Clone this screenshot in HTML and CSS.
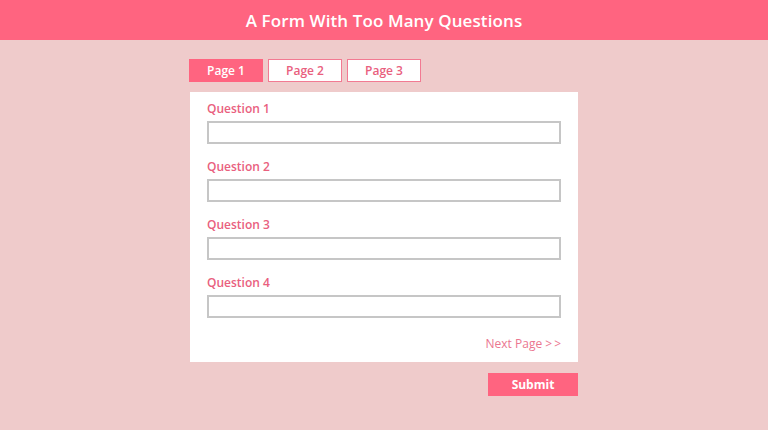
FILE: index.html
```html
<!DOCTYPE html>
<html lang="en">
<head>
<meta charset="utf-8">
<title>A Form With Too Many Questions</title>
<link rel="stylesheet" href="styles.css">
</head>
<body>
<header class="topbar">
  <h1 class="title">A Form With Too Many Questions</h1>
</header>
<main class="wrap">
  <nav class="tabs">
    <button class="tab active">Page 1</button>
    <button class="tab">Page 2</button>
    <button class="tab">Page 3</button>
  </nav>
  <form class="card">
    <div class="field">
      <label class="label">Question 1</label>
      <input class="input" type="text">
    </div>
    <div class="field">
      <label class="label">Question 2</label>
      <input class="input" type="text">
    </div>
    <div class="field">
      <label class="label">Question 3</label>
      <input class="input" type="text">
    </div>
    <div class="field">
      <label class="label">Question 4</label>
      <input class="input" type="text">
    </div>
    <div class="next-row"><a class="next" href="#">Next Page <span class="arrows">&gt;&gt;</span></a></div>
  </form>
  <div class="actions">
    <button class="submit">Submit</button>
  </div>
</main>
</body>
</html>
```
FILE: styles.css
```css
* { box-sizing: border-box; }
html, body {
  margin: 0;
  padding: 0;
  background: #efcbcb;
  font-family: "Open Sans", "Noto Sans", sans-serif;
  height: 100%;
}
.topbar {
  background: #ff6480;
  height: 40px;
  display: flex;
  align-items: center;
  justify-content: center;
}
.title {
  margin: 0;
  color: #ffffff;
  font-size: 17px;
  font-weight: 600;
  letter-spacing: 0.1px;
}
.wrap {
  width: 388px;
  margin: 0 auto;
  padding-top: 19px;
}
.tabs {
  display: flex;
  gap: 5px;
  margin-left: -1px;
}
.tab {
  width: 74px;
  height: 23px;
  background: #ffffff;
  border: 1px solid #f27a92;
  color: #e9607e;
  font-family: inherit;
  font-size: 12px;
  font-weight: 600;
  padding: 0;
}
.tab.active {
  background: #ff6480;
  border-color: #ff6480;
  color: #ffffff;
}
.card {
  background: #ffffff;
  margin: 10px 0 0;
  padding: 8px 17px 9px;
  height: 270px;
}
.field {
  display: flex;
  flex-direction: column;
  margin-bottom: 14px;
}
.label {
  color: #e9607e;
  font-size: 12px;
  font-weight: 600;
  line-height: 17px;
  margin-bottom: 4px;
}
.input {
  width: 354px;
  height: 23px;
  border: 2px solid #c6c6c6;
  background: #ffffff;
  margin: 0;
}
.next-row {
  display: flex;
  justify-content: flex-end;
  padding-top: 3px;
}
.next {
  color: #eb7690;
  font-size: 12px;
  text-decoration: none;
  line-height: 17px;
  white-space: nowrap;
  margin-right: -2px;
}
.arrows {
  letter-spacing: 2px;
}
.actions {
  display: flex;
  justify-content: flex-end;
  margin-top: 11px;
}
.submit {
  width: 90px;
  height: 23px;
  background: #ff6480;
  border: none;
  color: #ffffff;
  font-family: inherit;
  font-size: 12px;
  font-weight: 700;
  padding: 0;
}
```
